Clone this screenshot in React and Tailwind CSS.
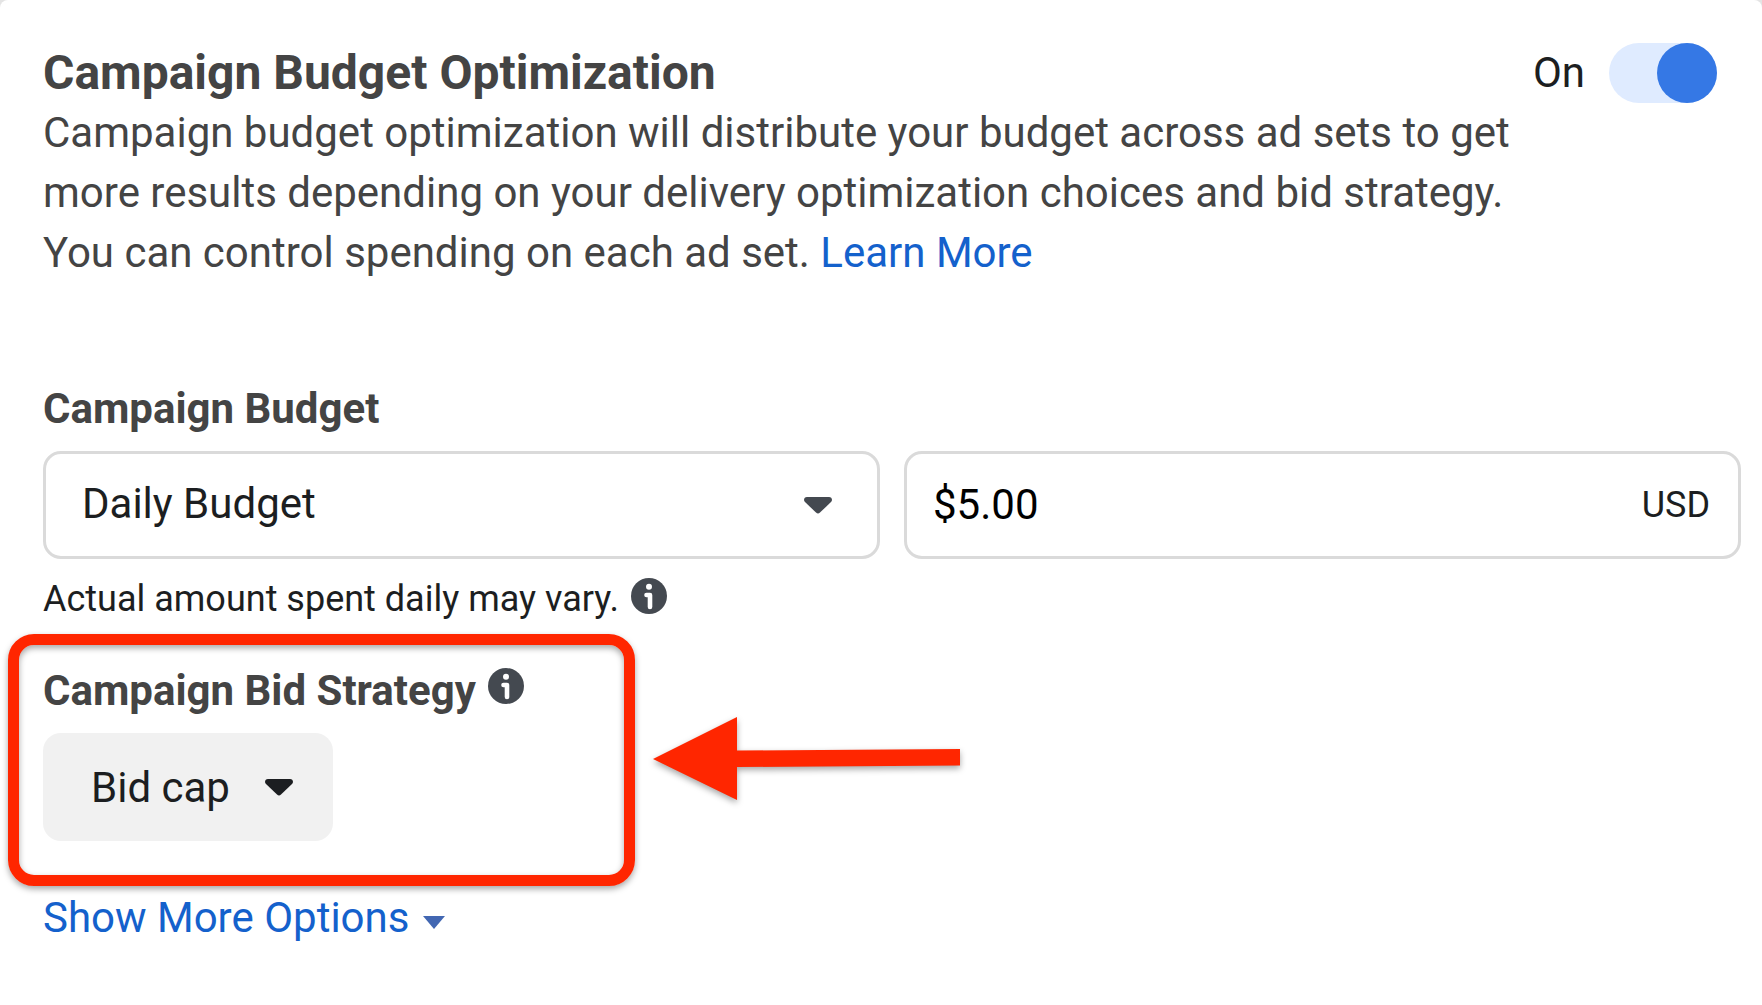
import { useState } from 'react';

function Caret({ className }) {
  return (
    <svg viewBox="0 0 28 17" className={className} fill="currentColor" aria-hidden="true">
      <path d="M3 0h22c2.8 0 4 3 2 5L16 15.6c-1.4 1.3-2.6 1.3-4 0L1 5C-1 3 .2 0 3 0z" />
    </svg>
  );
}

function InfoIcon() {
  return (
    <svg viewBox="0 0 36 36" className="mt-[7px] w-9 h-9 shrink-0 text-[#444950]" aria-hidden="true">
      <circle cx="18" cy="18" r="18" fill="currentColor" />
      <circle cx="18" cy="8.8" r="3" fill="#fff" />
      <path d="M15.5 17H19v12" fill="none" stroke="#fff" strokeWidth="4.6" strokeLinecap="round" strokeLinejoin="round" />
    </svg>
  );
}

export default function App() {
  const [enabled, setEnabled] = useState(true);
  const [amount, setAmount] = useState('$5.00');

  return (
    <div className="bg-[#e4e4e4]">
      <main className="min-h-screen rounded-t-lg bg-white pt-[43px] pl-[43px] pr-[21px] pb-16 font-['Roboto',sans-serif] text-[#1c1e21]">
        <header className="flex items-start justify-between pr-6">
          <div className="max-w-[1480px] text-[#444444]">
            <h1 className="text-[48px] leading-[60px] font-bold">Campaign Budget Optimization</h1>
            <p className="text-[42px] leading-[60px]">
              Campaign budget optimization will distribute your budget across ad sets to get more results depending on your delivery optimization choices and bid strategy. You can control spending on each ad set.{' '}
              <a href="#learn" className="text-[#1461cc]">Learn More</a>
            </p>
          </div>
          <label className="flex items-center gap-6 text-[42px] leading-[60px]">
            On
            <input type="checkbox" role="switch" checked={enabled} onChange={(e) => setEnabled(e.target.checked)}
              className="appearance-none w-[108px] h-[60px] rounded-full bg-[#dfebff] before:block before:size-[60px] before:rounded-full before:bg-[#3578e5] checked:before:ml-12" />
          </label>
        </header>

        <section className="mt-24">
          <h2 className="text-[42px] leading-[60px] font-bold text-[#444444]">Campaign Budget</h2>
          <div className="mt-3 grid grid-cols-2 gap-6">
            <div className="grid items-center">
              <select aria-label="Budget type" className="col-start-1 row-start-1 appearance-none w-full h-[108px] px-9 pb-1 rounded-[18px] border-3 border-[#dadada] bg-white text-[42px]">
                <option>Daily Budget</option>
                <option>Lifetime Budget</option>
              </select>
              <Caret className="col-start-1 row-start-1 justify-self-end mr-12 w-7 h-[17px] text-[#444950] pointer-events-none" />
            </div>
            <div className="flex items-center h-[108px] pl-[26px] pr-7 rounded-[18px] border-3 border-[#dadada]">
              <input aria-label="Budget amount" value={amount} onChange={(e) => setAmount(e.target.value)}
                className="flex-1 min-w-0 pb-0.5 text-[42px] text-black outline-none" />
              <span className="text-[36px]">USD</span>
            </div>
          </div>
          <div className="mt-3 flex items-start gap-3">
            <p className="text-[36px] leading-[56px]">Actual amount spent daily may vary.</p>
            <InfoIcon />
          </div>
        </section>

        <div className="mt-[7px] flex items-center gap-[18px]">
          <section className="-ml-[35px] w-[627px] h-[252px] rounded-[26px] border-11 border-[#ff2600] pt-4 pl-6 shadow-[0_3px_6px_rgba(0,0,0,0.35),inset_0_3px_6px_rgba(0,0,0,0.35)]">
            <div className="flex items-start gap-3">
              <h2 className="text-[42px] leading-[60px] font-bold text-[#444444]">Campaign Bid Strategy</h2>
              <InfoIcon />
            </div>
            <button type="button" className="mt-3 flex items-center gap-[35px] h-[108px] pl-12 pr-10 rounded-[18px] bg-[#f1f1f1] text-[42px]">
              Bid cap
              <Caret className="w-7 h-[17px]" />
            </button>
          </section>
          <svg viewBox="0 0 308 86" className="w-[308px] h-[86px] overflow-visible drop-shadow-[0_3px_3px_rgba(0,0,0,0.35)]" aria-hidden="true">
            <path d="M0 42 84 0V33.5L307 32V48.5L84 50V83z" fill="#ff2600" />
          </svg>
        </div>

        <button type="button" className="mt-0.5 flex items-center gap-3.5 text-[42px] leading-[60px] text-[#1461cc]">
          Show More Options
          <svg viewBox="0 0 22 13" className="mt-2 w-[22px] h-[13px] text-[#4267b2]" fill="currentColor" aria-hidden="true">
            <path d="M0 0h22L11 13z" />
          </svg>
        </button>
      </main>
    </div>
  );
}
